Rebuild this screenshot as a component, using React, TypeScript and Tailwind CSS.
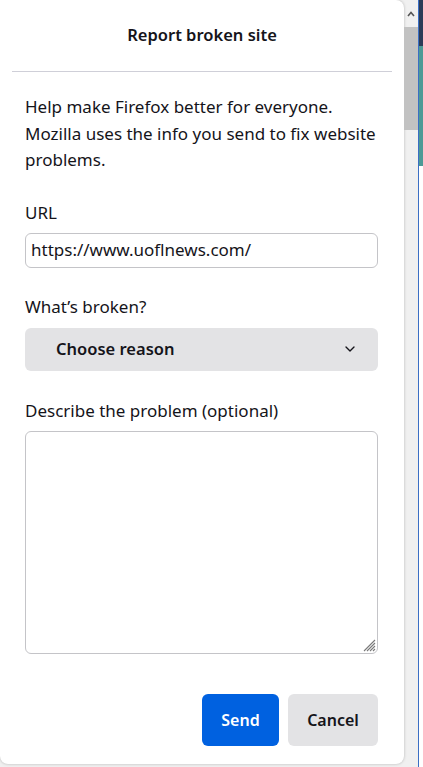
import { ChevronDown } from 'lucide-react';

export default function App() {
  return (
    <div
      className="flex w-[423px] h-[767px] bg-[#f0f0f0] text-[#15141a] overflow-hidden"
      style={{ fontFamily: '"Noto Sans", "Open Sans", sans-serif' }}
    >
      {/* Panel */}
      <div className="w-[404px] h-[764px] shrink-0 bg-white rounded-r-lg rounded-bl-lg shadow-[0_0_3px_rgba(0,0,0,0.25)] flex flex-col">
        <div className="h-[71px] flex items-center justify-center text-[16.5px] font-semibold">
          Report broken site
        </div>
        <div className="mx-3 h-px bg-[#cfcfd8]" />

        <div className="pl-[25px] pr-[26px] flex flex-col text-[17px] leading-[26.5px]">
          <p className="mt-[22px]">
            Help make Firefox better for everyone. Mozilla uses the info you send to fix website problems.
          </p>

          <label className="mt-[26px]">URL</label>
          <div className="mt-[7px] h-[35px] rounded-md border border-[#c4c4c8] flex items-center px-[5px]">
            https://www.uoflnews.com/
          </div>

          <label className="mt-[26px]">What’s broken?</label>
          <div className="mt-[7px] h-[43px] rounded-md bg-[#e3e3e5] flex items-center justify-between pl-[31px] pr-[20px]">
            <span className="font-semibold text-[16.5px]">Choose reason</span>
            <ChevronDown className="w-4 h-4" strokeWidth={2} />
          </div>

          <label className="mt-[27px]">Describe the problem (optional)</label>
          <div className="relative mt-[7px] h-[223px] rounded-md border border-[#c4c4c8]">
            <svg className="absolute right-[1px] bottom-[1px]" width="14" height="14" viewBox="0 0 14 14">
              <path d="M13 2 L2 13 M13 5 L5 13 M13 8 L8 13 M13 11 L11 13" stroke="#7a7a7a" strokeWidth="1.1" />
            </svg>
          </div>

          <div className="mt-[40px] flex justify-end gap-[9px]">
            <button className="h-[52px] w-[77px] rounded-md bg-[#0061e0] text-white font-semibold text-[16px]">
              Send
            </button>
            <button className="h-[52px] w-[90px] rounded-md bg-[#e3e3e5] font-semibold text-[16px]">
              Cancel
            </button>
          </div>
        </div>
      </div>

      {/* Scrollbar */}
      <div className="w-[14px] shrink-0 flex flex-col">
        <div className="h-[27px] flex items-center justify-center">
          <svg width="8" height="6" viewBox="0 0 8 6">
            <path d="M1 5 L4 1.5 L7 5" stroke="#555" strokeWidth="1.6" fill="none" />
          </svg>
        </div>
        <div className="h-[103px] bg-[#c2c2c2]" />
        <div className="flex-1" />
      </div>

      {/* Edge of the page behind */}
      <div className="w-px shrink-0 bg-[#3b6fc4]" />
      <div className="flex-1 flex flex-col bg-white">
        <div className="h-[46px] bg-[#2c3b58]" />
        <div className="h-[120px] bg-[#4d9a96]" />
        <div className="flex-1" />
      </div>
    </div>
  );
}
